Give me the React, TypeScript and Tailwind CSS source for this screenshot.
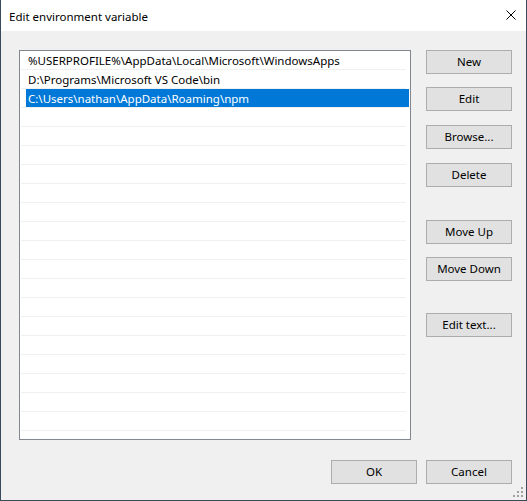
import React from "react";

const rows = [
  "%USERPROFILE%\\AppData\\Local\\Microsoft\\WindowsApps",
  "D:\\Programs\\Microsoft VS Code\\bin",
  "C:\\Users\\nathan\\AppData\\Roaming\\npm",
];

function Btn({ label, className = "" }: { label: string; className?: string }) {
  return (
    <div
      className={
        "w-[86px] h-[24px] shrink-0 bg-[#e1e1e1] border border-[#adadad] flex items-center justify-center text-[11.5px] text-black leading-none " +
        className
      }
    >
      {label}
    </div>
  );
}

export default function App() {
  const all = Array.from({ length: 21 }, (_, i) => rows[i] ?? "");
  return (
    <div
      className="w-[527px] h-[501px] flex flex-col bg-[#f0f0f0] border-x border-b border-[#3a4a5b] overflow-hidden relative"
      style={{ fontFamily: '"Noto Sans", "Open Sans", sans-serif' }}
    >
      <div className="h-[31px] shrink-0 bg-white flex items-center justify-between pl-[8px]">
        <span className="text-[11.5px] text-black pt-[2px]">Edit environment variable</span>
        <svg width="10" height="10" viewBox="0 0 10 10" className="mr-[10px] mb-[1px]">
          <path d="M0.5 0.5 L9.5 9.5 M9.5 0.5 L0.5 9.5" stroke="#000" strokeWidth="1" />
        </svg>
      </div>
      <div className="flex-1 flex flex-col pl-[18px] pr-[14px] pt-[19px] pb-[16px]">
        <div className="flex">
          <div className="w-[392px] h-[390px] bg-white border border-[#828790] overflow-hidden">
            {all.map((t, i) => (
              <div key={i} className="h-[19px] px-[1px]">
                <div className="h-[18px] relative">
                  <div
                    className={
                      "absolute inset-y-0 left-[5px] right-0 pl-[2px] pt-[2px] flex items-center text-[11.5px] whitespace-nowrap " +
                      (i === 2 ? "bg-[#0078d7] text-white" : "text-black")
                    }
                  >
                    {t}
                  </div>
                </div>
                <div className="h-[1px] bg-[#f0f0f0] mr-[3px]" />
              </div>
            ))}
          </div>
          <div className="ml-[15px] flex flex-col">
            <Btn label="New" />
            <Btn label="Edit" className="mt-[13px]" />
            <Btn label="Browse..." className="mt-[14px]" />
            <Btn label="Delete" className="mt-[14px]" />
            <Btn label="Move Up" className="mt-[33px]" />
            <Btn label="Move Down" className="mt-[13px]" />
            <Btn label="Edit text..." className="mt-[32px]" />
          </div>
        </div>
        <div className="mt-[20px] flex justify-end gap-[9px]">
          <Btn label="OK" />
          <Btn label="Cancel" />
        </div>
      </div>
      <svg width="11" height="11" viewBox="0 0 11 11" className="absolute right-[2px] bottom-[2px]">
        <rect x="8" y="0" width="2" height="2" fill="#a0a0a0" />
        <rect x="4" y="4" width="2" height="2" fill="#a0a0a0" />
        <rect x="8" y="4" width="2" height="2" fill="#a0a0a0" />
        <rect x="0" y="8" width="2" height="2" fill="#a0a0a0" />
        <rect x="4" y="8" width="2" height="2" fill="#a0a0a0" />
        <rect x="8" y="8" width="2" height="2" fill="#a0a0a0" />
      </svg>
    </div>
  );
}
